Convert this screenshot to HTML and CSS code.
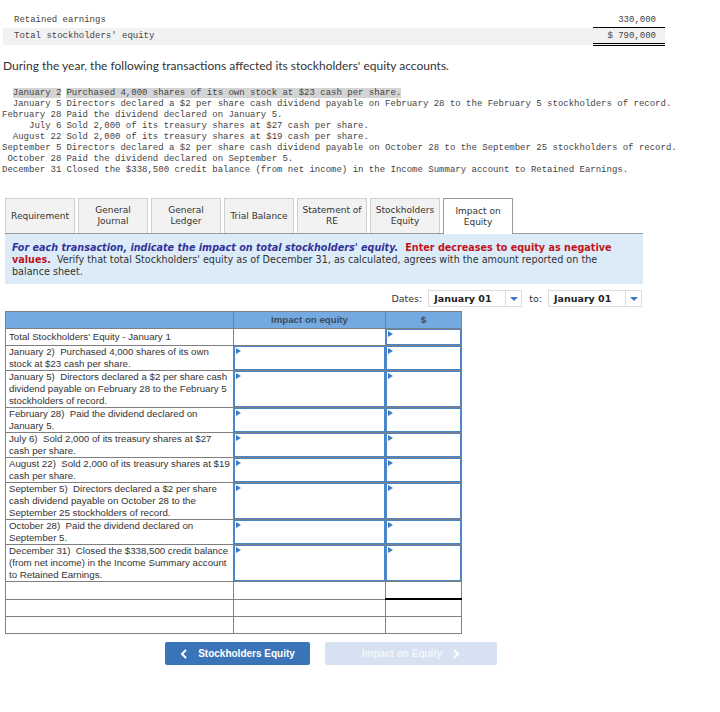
FILE: index.html
```html
<!DOCTYPE html>
<html lang="en">
<head>
    <meta charset="UTF-8">
    <meta name="viewport" content="width=device-width, initial-scale=1.0">
    <title>Stockholders' Equity - Impact on Equity</title>
    <link rel="stylesheet" href="styles.css">
</head>
<body>
    <table class="balance">
        <tr>
            <td class="balance-label">Retained earnings</td>
            <td class="balance-amt sub">330,000</td>
        </tr>
        <tr class="shaded">
            <td class="balance-label">Total stockholders' equity</td>
            <td class="balance-amt total">$ 790,000</td>
        </tr>
    </table>

    <p class="intro">During the year, the following transactions affected its stockholders' equity accounts.</p>

    <table class="events">
        <tr><td class="ev-date"><span class="hl">January 2</span></td><td class="ev-text"><span class="hl">Purchased 4,000 shares of its own stock at $23 cash per share.</span></td></tr>
        <tr><td class="ev-date">January 5</td><td class="ev-text">Directors declared a $2 per share cash dividend payable on February 28 to the February 5 stockholders of record.</td></tr>
        <tr><td class="ev-date">February 28</td><td class="ev-text">Paid the dividend declared on January 5.</td></tr>
        <tr><td class="ev-date">July 6</td><td class="ev-text">Sold 2,000 of its treasury shares at $27 cash per share.</td></tr>
        <tr><td class="ev-date">August 22</td><td class="ev-text">Sold 2,000 of its treasury shares at $19 cash per share.</td></tr>
        <tr><td class="ev-date">September 5</td><td class="ev-text">Directors declared a $2 per share cash dividend payable on October 28 to the September 25 stockholders of record.</td></tr>
        <tr><td class="ev-date">October 28</td><td class="ev-text">Paid the dividend declared on September 5.</td></tr>
        <tr><td class="ev-date">December 31</td><td class="ev-text">Closed the $338,500 credit balance (from net income) in the Income Summary account to Retained Earnings.</td></tr>
    </table>

    <div class="tabs">
        <div class="tab">Requirement</div>
        <div class="tab">General<br>Journal</div>
        <div class="tab">General<br>Ledger</div>
        <div class="tab">Trial Balance</div>
        <div class="tab">Statement of<br>RE</div>
        <div class="tab">Stockholders<br>Equity</div>
        <div class="tab active">Impact on<br>Equity</div>
    </div>

    <div class="instructions">
        <b class="ask">For each transaction, indicate the impact on total stockholders' equity.</b>
        <b class="warn">Enter decreases to equity as negative values.</b>
        Verify that total Stockholders' equity as of December 31, as calculated, agrees with the amount reported on the balance sheet.
    </div>

    <div class="dates">
        <span>Dates:</span>
        <div class="select">January 01<span class="caret"></span></div>
        <span>to:</span>
        <div class="select">January 01<span class="caret"></span></div>
    </div>

    <table class="sheet">
        <colgroup>
            <col class="c-desc">
            <col class="c-impact">
            <col class="c-amt">
        </colgroup>
        <tr class="head">
            <th></th>
            <th>Impact on equity</th>
            <th>$</th>
        </tr>
        <tr>
            <td class="desc">Total Stockholders' Equity - January 1</td>
            <td></td>
            <td class="entry"><i class="flag"></i></td>
        </tr>
        <tr>
            <td class="desc">January 2)&nbsp; Purchased 4,000 shares of its own stock at $23 cash per share.</td>
            <td class="entry"><i class="flag"></i></td>
            <td class="entry"><i class="flag"></i></td>
        </tr>
        <tr>
            <td class="desc">January 5)&nbsp; Directors declared a $2 per share cash dividend payable on February 28 to the February 5 stockholders of record.</td>
            <td class="entry"><i class="flag"></i></td>
            <td class="entry"><i class="flag"></i></td>
        </tr>
        <tr>
            <td class="desc">February 28)&nbsp; Paid the dividend declared on January 5.</td>
            <td class="entry"><i class="flag"></i></td>
            <td class="entry"><i class="flag"></i></td>
        </tr>
        <tr>
            <td class="desc">July 6)&nbsp; Sold 2,000 of its treasury shares at $27 cash per share.</td>
            <td class="entry"><i class="flag"></i></td>
            <td class="entry"><i class="flag"></i></td>
        </tr>
        <tr>
            <td class="desc">August 22)&nbsp; Sold 2,000 of its treasury shares at $19 cash per share.</td>
            <td class="entry"><i class="flag"></i></td>
            <td class="entry"><i class="flag"></i></td>
        </tr>
        <tr>
            <td class="desc">September 5)&nbsp; Directors declared a $2 per share cash dividend payable on October 28 to the September 25 stockholders of record.</td>
            <td class="entry"><i class="flag"></i></td>
            <td class="entry"><i class="flag"></i></td>
        </tr>
        <tr>
            <td class="desc">October 28)&nbsp; Paid the dividend declared on September 5.</td>
            <td class="entry"><i class="flag"></i></td>
            <td class="entry"><i class="flag"></i></td>
        </tr>
        <tr>
            <td class="desc">December 31)&nbsp; Closed the $338,500 credit balance (from net income) in the Income Summary account to Retained Earnings.</td>
            <td class="entry"><i class="flag"></i></td>
            <td class="entry"><i class="flag"></i></td>
        </tr>
        <tr class="blank">
            <td></td>
            <td></td>
            <td class="sum"></td>
        </tr>
        <tr class="blank">
            <td></td>
            <td></td>
            <td></td>
        </tr>
        <tr class="blank">
            <td></td>
            <td></td>
            <td></td>
        </tr>
    </table>

    <div class="nav">
        <button class="btn prev">
            <svg width="8" height="10" viewBox="0 0 8 10"><path d="M6 1 L2 5 L6 9" fill="none" stroke="#fff" stroke-width="2"/></svg>
            Stockholders Equity
        </button>
        <button class="btn next">
            Impact on Equity
            <svg width="8" height="10" viewBox="0 0 8 10"><path d="M2 1 L6 5 L2 9" fill="none" stroke="#fff" stroke-width="2"/></svg>
        </button>
    </div>
</body>
</html>
```

FILE: styles.css
```css
body {
    margin: 0;
    font-family: "Liberation Sans", Arial, sans-serif;
    color: #333;
    background: #fff;
}

/* balance sheet tail */
.balance {
    border-collapse: collapse;
    width: 662px;
    margin: 12px 0 0 3px;
    font-family: "Liberation Mono", "DejaVu Sans Mono", monospace;
    font-size: 9px;
    color: #444;
}
.balance td {
    height: 14px;
    padding: 1px 0 0;
}
.balance .shaded td {
    height: 15px;
    padding: 0;
    background: #f2f2f2;
}
.balance-label {
    padding-left: 11px !important;
}
.balance-amt {
    width: 63px;
    text-align: right;
    padding-right: 9px !important;
}
.balance-amt.sub {
    border-bottom: 1px solid #000;
}
.balance-amt.total {
    border-bottom: 3px double #000;
}

.intro {
    margin: 12px 0 0 3px;
    font-family: Lato, "Liberation Sans", sans-serif;
    font-size: 12px;
    color: #333;
}

/* transaction list */
.events {
    border-collapse: collapse;
    margin: 15px 0 0 2px;
    font-family: "Liberation Mono", "DejaVu Sans Mono", monospace;
    font-size: 9px;
    line-height: 11px;
    color: #444;
    white-space: pre;
}
.events td {
    padding: 0;
}
.ev-date {
    text-align: right;
    width: 59px;
}
.ev-text {
    padding-left: 5px !important;
}
.hl {
    background: #d4d4d4;
}

/* tabs */
.tabs {
    display: flex;
    gap: 3px;
    margin: 22px 0 0 5px;
    width: 638px;
    border-bottom: 1px solid #9a9a9a;
}
.tab {
    width: 68px;
    height: 34px;
    display: flex;
    align-items: center;
    justify-content: center;
    text-align: center;
    background: #f2f2f2;
    border: 1px solid #cfcfcf;
    border-bottom: none;
    font-family: "DejaVu Sans", Verdana, sans-serif;
    font-size: 9px;
    line-height: 11px;
    color: #333;
}
.tab.active {
    background: #fff;
    border-color: #9a9a9a;
    margin-bottom: -1px;
    height: 35px;
}

.instructions {
    width: 604px;
    margin-left: 5px;
    padding: 8px 27px 4px 7px;
    height: 38px;
    background: #dcebf8;
    font-family: "DejaVu Sans", Verdana, sans-serif;
    font-size: 9.65px;
    line-height: 12px;
    color: #333;
}
.instructions .ask {
    color: #333399;
    font-style: italic;
    margin-right: 4px;
}
.instructions .warn {
    color: #c0151b;
    margin-right: 3px;
}

/* date range */
.dates {
    display: flex;
    justify-content: flex-end;
    align-items: center;
    gap: 6px;
    width: 637px;
    margin: 6px 0 0 5px;
    font-family: "DejaVu Sans", Verdana, sans-serif;
    font-size: 9.5px;
    color: #333;
}
.select {
    position: relative;
    width: 87px;
    height: 15px;
    line-height: 15px;
    padding-left: 5px;
    border: 1px solid #ddd;
    font-weight: bold;
    color: #222;
}
.select + span {
    margin-left: 1px;
}
.caret {
    position: absolute;
    right: 0;
    top: 0;
    width: 15px;
    height: 15px;
    border-left: 1px solid #ddd;
}
.caret::after {
    content: "";
    position: absolute;
    left: 4px;
    top: 6px;
    border-left: 4px solid transparent;
    border-right: 4px solid transparent;
    border-top: 4px solid #3b78c2;
}

/* worksheet */
.sheet {
    border-collapse: collapse;
    margin: 4px 0 0 5px;
    width: 456px;
    table-layout: fixed;
    font-size: 9.7px;
    line-height: 12px;
    color: #333;
}
.c-desc { width: 228px; }
.c-impact { width: 152px; }
.c-amt { width: 76px; }
.sheet th,
.sheet td {
    border: 1px solid #7f7f7f;
    padding: 0;
}
.sheet .head th {
    height: 16px;
    background: #74aae1;
    font-weight: bold;
    color: #3d4a5a;
}
.sheet .desc {
    padding: 0 2px 0 3px;
    height: 16px;
}
.sheet .entry {
    vertical-align: top;
    box-shadow: inset 0 0 0 1px #4a85c8;
}
.flag {
    display: block;
    width: 0;
    height: 0;
    margin: 2px 0 0 2px;
    border-top: 3px solid transparent;
    border-bottom: 3px solid transparent;
    border-left: 5px solid #3b7cc6;
}
.sheet .blank td {
    height: 16px;
}
.sheet .sum {
    border-top: 1px solid #000;
    border-bottom: 2px solid #000;
}

/* step buttons */
.nav {
    display: flex;
    gap: 15px;
    margin: 8px 0 0 165px;
}
.btn {
    height: 23px;
    border: none;
    border-radius: 2px;
    font-family: "Liberation Sans", Arial, sans-serif;
    font-size: 10px;
    font-weight: bold;
    color: #fff;
    display: flex;
    align-items: center;
    justify-content: center;
    gap: 10px;
}
.btn.prev {
    width: 145px;
    background: #3a74b8;
}
.btn.next {
    width: 172px;
    background: #d6e2f1;
    color: #f3f6fa;
}
```
